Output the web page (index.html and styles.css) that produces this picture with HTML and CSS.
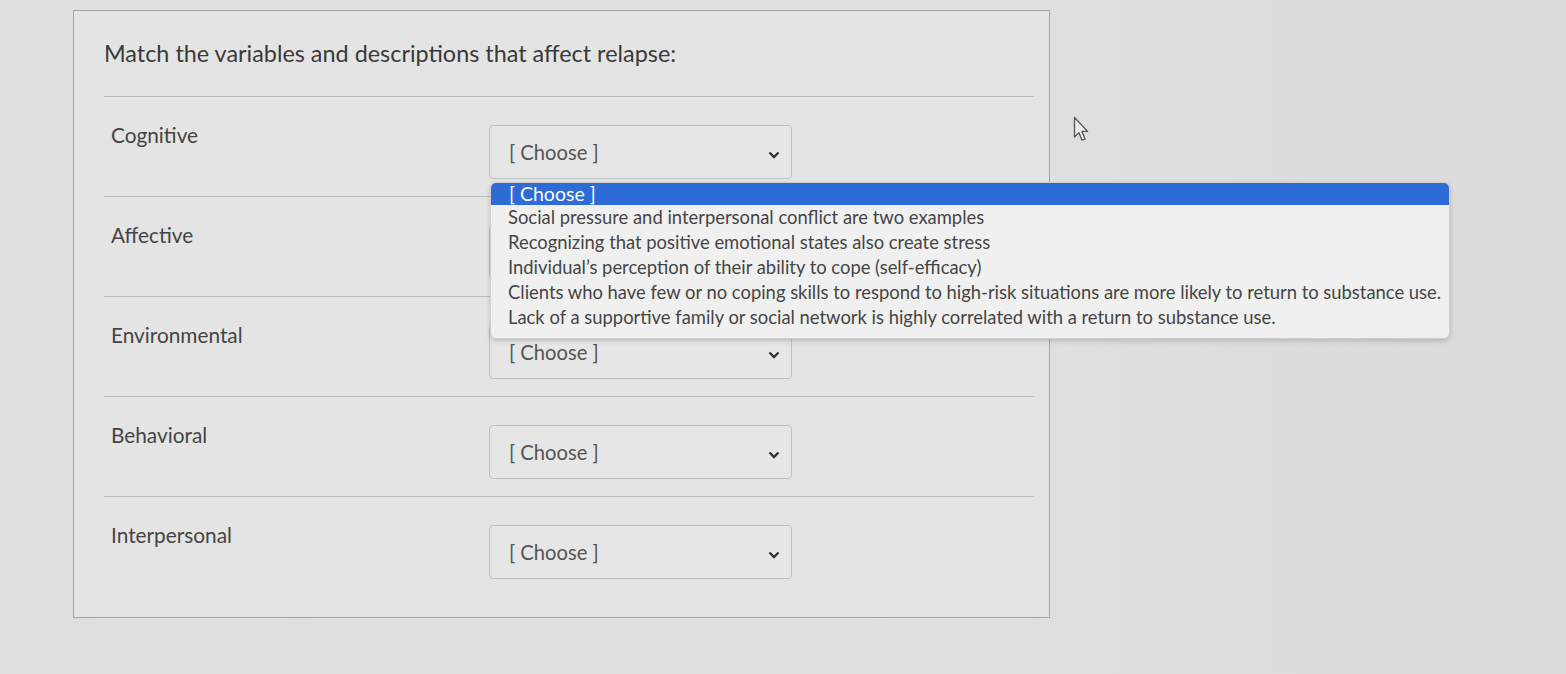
FILE: index.html
```html
<!DOCTYPE html>
<html lang="en">
<head>
<meta charset="utf-8">
<title>Match the variables</title>
<link rel="stylesheet" href="styles.css">
</head>
<body>
<div class="page">
  <div class="card">
    <div class="title">Match the variables and descriptions that affect relapse:</div>
    <div class="row">
      <div class="label">Cognitive</div>
      <div class="select-wrap">
        <div class="select open"><span>[ Choose ]</span><svg class="chev" width="12" height="8" viewBox="0 0 12 8"><polyline points="1.5,1.5 6,6 10.5,1.5" fill="none" stroke="#333" stroke-width="2.4"/></svg></div>
        <ul class="listbox">
          <li class="selected">[ Choose ]</li>
          <li>Social pressure and interpersonal conflict are two examples</li>
          <li>Recognizing that positive emotional states also create stress</li>
          <li>Individual’s perception of their ability to cope (self-efficacy)</li>
          <li>Clients who have few or no coping skills to respond to high-risk situations are more likely to return to substance use.</li>
          <li>Lack of a supportive family or social network is highly correlated with a return to substance use.</li>
        </ul>
      </div>
    </div>
    <div class="row">
      <div class="label">Affective</div>
      <div class="select-wrap">
        <div class="select covered"><span>[ Choose ]</span><svg class="chev" width="12" height="8" viewBox="0 0 12 8"><polyline points="1.5,1.5 6,6 10.5,1.5" fill="none" stroke="#333" stroke-width="2.4"/></svg></div>
      </div>
    </div>
    <div class="row">
      <div class="label">Environmental</div>
      <div class="select-wrap">
        <div class="select"><span>[ Choose ]</span><svg class="chev" width="12" height="8" viewBox="0 0 12 8"><polyline points="1.5,1.5 6,6 10.5,1.5" fill="none" stroke="#333" stroke-width="2.4"/></svg></div>
      </div>
    </div>
    <div class="row">
      <div class="label">Behavioral</div>
      <div class="select-wrap">
        <div class="select"><span>[ Choose ]</span><svg class="chev" width="12" height="8" viewBox="0 0 12 8"><polyline points="1.5,1.5 6,6 10.5,1.5" fill="none" stroke="#333" stroke-width="2.4"/></svg></div>
      </div>
    </div>
    <div class="row last">
      <div class="label">Interpersonal</div>
      <div class="select-wrap">
        <div class="select"><span>[ Choose ]</span><svg class="chev" width="12" height="8" viewBox="0 0 12 8"><polyline points="1.5,1.5 6,6 10.5,1.5" fill="none" stroke="#333" stroke-width="2.4"/></svg></div>
      </div>
    </div>
  </div>
  <svg class="cursor" width="16" height="27" viewBox="0 0 16 27"><path d="M1.5 1.5 L1.5 21 L5.9 16.6 L9 24.2 L12.1 22.9 L9 15.4 L14.6 15.4 Z" fill="#ececec" stroke="#555" stroke-width="1.3" stroke-linejoin="round"/></svg>
</div>
</body>
</html>
```
FILE: styles.css
```css
* { box-sizing: border-box; }
html, body {
  margin: 0;
  padding: 0;
}
body {
  background: #dcdbdb;
  font-family: Lato, "Open Sans", "Liberation Sans", sans-serif;
  color: #3c3c3c;
  width: 1566px;
  height: 674px;
  overflow: hidden;
}
.page {
  position: relative;
  width: 1566px;
  height: 674px;
  background: linear-gradient(90deg, #dfdfdf 0%, #e0e0e0 60%, #dcdada 100%);
}
.card {
  position: relative;
  margin-left: 73px;
  top: 10px;
  width: 977px;
  height: 608px;
  border: 1px solid #a3a3a3;
  background: #e4e4e4;
  padding: 0 15px 0 30px;
}
.title {
  height: 86px;
  padding-top: 27px;
  font-size: 23.4px;
  line-height: 30px;
  color: #3a3a3a;
  border-bottom: 1px solid #b9b9b9;
}
.row {
  display: grid;
  grid-template-columns: 378px 303px;
  height: 100px;
  padding-left: 7px;
  border-bottom: 1px solid #bdbdbd;
}
.row.last { border-bottom: none; }
.label {
  margin-top: 25px;
  font-size: 20.8px;
  line-height: 26px;
  color: #444;
}
.select-wrap {
  position: relative;
  margin-top: 28px;
}
.select {
  height: 54px;
  border: 1px solid #bfbfbf;
  border-radius: 4px;
  background: #e6e6e6;
  display: flex;
  align-items: center;
  justify-content: space-between;
  padding: 0 11px 0 19px;
  font-size: 20.2px;
  color: #555;
}
.select.covered span { visibility: hidden; }
.select span { margin-top: -1px; }
.chev { margin-top: 6px; }
.listbox {
  position: absolute;
  top: 57px;
  left: 1px;
  z-index: 5;
  margin: 0;
  padding: 0 8px 8px 0;
  list-style: none;
  width: max-content;
  background: #f1f0f0;
  border: 1px solid #cfcfcf;
  border-radius: 6px;
  overflow: hidden;
  box-shadow: 0 2px 5px rgba(0, 0, 0, 0.18);
}
.listbox li {
  height: 25px;
  line-height: 25px;
  padding-left: 17px;
  font-size: 18.4px;
  color: #454545;
  white-space: nowrap;
}
.listbox li.selected {
  height: 22px;
  line-height: 22px;
  background: #2d6bd6;
  color: #fff;
  margin-right: -8px;
  font-size: 19.5px;
  padding-left: 18px;
}
.cursor {
  position: absolute;
  left: 1073px;
  top: 116px;
}
```
